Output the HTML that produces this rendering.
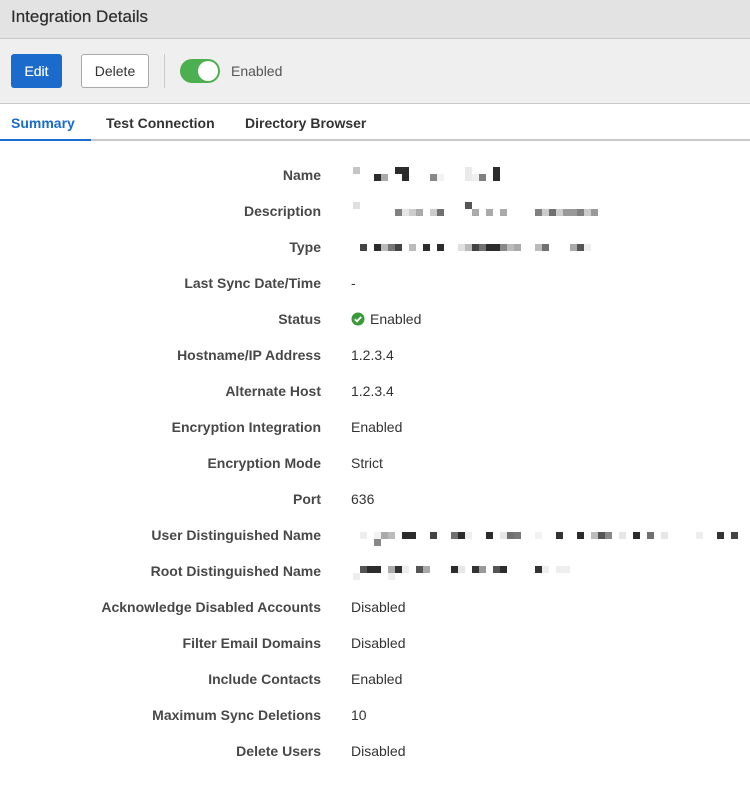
<!DOCTYPE html>
<html><head><style>
*{margin:0;padding:0;box-sizing:border-box}
body{width:750px;height:793px;background:#fff;font-family:"Liberation Sans",sans-serif;color:#333;position:relative;overflow:hidden}
.hdr{position:absolute;left:0;top:0;width:750px;height:39px;background:#e3e3e3;border-bottom:1px solid #c8c8c8}
.hdr span{position:absolute;left:11px;top:7px;font-size:17px;color:#2e2e2e;text-shadow:0 0 0.4px #2e2e2e}
.tb{position:absolute;left:0;top:39px;width:750px;height:65px;background:#efefef;border-bottom:1px solid #c8c8c8}
.btn{position:absolute;top:15px;height:34px;border-radius:3px;font-size:14px;line-height:34px;text-align:center}
.tabs{position:absolute;left:0;top:104px;width:750px;height:37px;border-bottom:2px solid #c9c9c9}
.tab{position:absolute;top:11px;font-size:14px;font-weight:bold;color:#333}
.row{position:absolute;left:0;width:750px;height:20px;font-size:14px}
.row .l{position:absolute;right:429px;top:0;color:#484848;font-weight:bold;white-space:nowrap}
.row .v{position:absolute;left:351px;top:0;color:#333}
.p{position:absolute;width:7px;height:7px}
</style></head><body>
<div class="hdr"><span>Integration Details</span></div>
<div class="tb">
<div class="btn" style="left:11px;width:51px;background:#1a6bcb;color:#fff;text-shadow:0 0 0.4px #fff">Edit</div>
<div class="btn" style="left:81px;width:68px;background:#fff;border:1px solid #aaa;color:#333;line-height:32px">Delete</div>
<div style="position:absolute;left:164px;top:15px;width:1px;height:34px;background:#ccc"></div>
<div style="position:absolute;left:180px;top:20px;width:40px;height:24px;border-radius:12px;background:#4caf50"></div>
<div style="position:absolute;left:198px;top:22px;width:20px;height:20px;border-radius:10px;background:#fff"></div>
<div style="position:absolute;left:231px;top:24px;font-size:14px;color:#555">Enabled</div>
</div>
<div class="tabs">
<div class="tab" style="left:11px;color:#1a6bcb">Summary</div>
<div class="tab" style="left:106px">Test Connection</div>
<div class="tab" style="left:245px">Directory Browser</div>
<div style="position:absolute;left:0;top:35px;width:91px;height:2px;background:#1a6bcb"></div>
</div>
<div class="row" style="top:167px"><span class="l">Name</span></div>
<div class="row" style="top:203px"><span class="l">Description</span></div>
<div class="row" style="top:239px"><span class="l">Type</span></div>
<div class="row" style="top:275px"><span class="l">Last Sync Date/Time</span><span class="v">-</span></div>
<div class="row" style="top:311px"><span class="l">Status</span><span class="v"><svg width="14" height="14" viewBox="0 0 14 14" style="vertical-align:-2px;margin-right:5px"><circle cx="7" cy="7" r="6.5" fill="#3a9a3a"/><path d="M3.8 7.2l2.2 2.1 4.2-4.4" stroke="#fff" stroke-width="1.8" fill="none"/></svg>Enabled</span></div>
<div class="row" style="top:347px"><span class="l">Hostname/IP Address</span><span class="v">1.2.3.4</span></div>
<div class="row" style="top:383px"><span class="l">Alternate Host</span><span class="v">1.2.3.4</span></div>
<div class="row" style="top:419px"><span class="l">Encryption Integration</span><span class="v">Enabled</span></div>
<div class="row" style="top:455px"><span class="l">Encryption Mode</span><span class="v">Strict</span></div>
<div class="row" style="top:491px"><span class="l">Port</span><span class="v">636</span></div>
<div class="row" style="top:527px"><span class="l">User Distinguished Name</span></div>
<div class="row" style="top:563px"><span class="l">Root Distinguished Name</span></div>
<div class="row" style="top:599px"><span class="l">Acknowledge Disabled Accounts</span><span class="v">Disabled</span></div>
<div class="row" style="top:635px"><span class="l">Filter Email Domains</span><span class="v">Disabled</span></div>
<div class="row" style="top:671px"><span class="l">Include Contacts</span><span class="v">Enabled</span></div>
<div class="row" style="top:707px"><span class="l">Maximum Sync Deletions</span><span class="v">10</span></div>
<div class="row" style="top:743px"><span class="l">Delete Users</span><span class="v">Disabled</span></div>

<div class="p" style="left:353px;top:167px;background:#c5c5c5"></div>
<div class="p" style="left:374px;top:174px;background:#2c2c2c"></div>
<div class="p" style="left:381px;top:174px;background:#aaa"></div>
<div class="p" style="left:395px;top:167px;width:14px;background:#2c2c2c"></div>
<div class="p" style="left:402px;top:174px;background:#2c2c2c"></div>
<div class="p" style="left:430px;top:174px;background:#888"></div>
<div class="p" style="left:437px;top:174px;background:#f2f2f2"></div>
<div class="p" style="left:465px;top:167px;height:14px;background:#eaeaea"></div>
<div class="p" style="left:472px;top:174px;background:#f0f0f0"></div>
<div class="p" style="left:479px;top:174px;background:#808080"></div>
<div class="p" style="left:493px;top:167px;height:14px;background:#2c2c2c"></div>
<div class="p" style="left:353px;top:202px;background:#e0e0e0"></div>
<div class="p" style="left:395px;top:209px;background:#808080"></div>
<div class="p" style="left:402px;top:209px;background:#e6e6e6"></div>
<div class="p" style="left:409px;top:209px;background:#ccc"></div>
<div class="p" style="left:416px;top:209px;background:#aaa"></div>
<div class="p" style="left:430px;top:209px;background:#ccc"></div>
<div class="p" style="left:437px;top:209px;background:#707070"></div>
<div class="p" style="left:465px;top:202px;background:#555"></div>
<div class="p" style="left:472px;top:209px;background:#aaa"></div>
<div class="p" style="left:486px;top:209px;background:#aaa"></div>
<div class="p" style="left:500px;top:209px;background:#aaa"></div>
<div class="p" style="left:535px;top:209px;width:63px;background:linear-gradient(90deg,#808080 0 7px,#ccc 7px 14px,#707070 14px 21px,#ccc 21px 28px,#999 28px 42px,#808080 42px 49px,#ccc 49px 56px,#999 56px)"></div>
<div class="p" style="left:360px;top:244px;background:#444"></div>
<div class="p" style="left:374px;top:244px;width:28px;background:linear-gradient(90deg,#2c2c2c 0 7px,#bbb 7px 14px,#777 14px 21px,#444 21px)"></div>
<div class="p" style="left:409px;top:244px;background:#bbb"></div>
<div class="p" style="left:423px;top:244px;background:#2c2c2c"></div>
<div class="p" style="left:437px;top:244px;background:#2c2c2c"></div>
<div class="p" style="left:458px;top:244px;width:63px;background:linear-gradient(90deg,#e0e0e0 0 7px,#bbb 7px 14px,#444 14px 21px,#707070 21px 28px,#2c2c2c 28px 42px,#888 42px 49px,#bbb 49px 56px,#aaa 56px)"></div>
<div class="p" style="left:535px;top:244px;background:#bbb"></div>
<div class="p" style="left:542px;top:244px;background:#707070"></div>
<div class="p" style="left:570px;top:244px;background:#aaa"></div>
<div class="p" style="left:577px;top:244px;background:#555"></div>
<div class="p" style="left:584px;top:244px;background:#eee"></div>
<div class="p" style="left:360px;top:532px;background:#eee"></div>
<div class="p" style="left:374px;top:532px;width:21px;background:linear-gradient(90deg,#f2f2f2 0 7px,#aaa 7px 14px,#bbb 14px)"></div>
<div class="p" style="left:374px;top:539px;background:#888"></div>
<div class="p" style="left:402px;top:532px;width:14px;background:#2c2c2c"></div>
<div class="p" style="left:430px;top:532px;background:#444"></div>
<div class="p" style="left:451px;top:532px;width:21px;background:linear-gradient(90deg,#707070 0 7px,#2c2c2c 7px 14px,#eee 14px)"></div>
<div class="p" style="left:486px;top:532px;background:#2c2c2c"></div>
<div class="p" style="left:500px;top:532px;width:21px;background:linear-gradient(90deg,#e6e6e6 0 7px,#707070 7px 14px,#777 14px)"></div>
<div class="p" style="left:535px;top:532px;background:#f2f2f2"></div>
<div class="p" style="left:556px;top:532px;background:#333"></div>
<div class="p" style="left:577px;top:532px;background:#2c2c2c"></div>
<div class="p" style="left:591px;top:532px;width:21px;background:linear-gradient(90deg,#bbb 0 7px,#555 7px 14px,#888 14px)"></div>
<div class="p" style="left:619px;top:532px;background:#e6e6e6"></div>
<div class="p" style="left:633px;top:532px;background:#2c2c2c"></div>
<div class="p" style="left:647px;top:532px;background:#707070"></div>
<div class="p" style="left:661px;top:532px;background:#e6e6e6"></div>
<div class="p" style="left:696px;top:532px;background:#eee"></div>
<div class="p" style="left:717px;top:532px;background:#333"></div>
<div class="p" style="left:731px;top:532px;background:#444"></div>
<div class="p" style="left:360px;top:566px;width:21px;background:linear-gradient(90deg,#555 0 7px,#2c2c2c 7px)"></div>
<div class="p" style="left:388px;top:566px;width:21px;background:linear-gradient(90deg,#aaa 0 7px,#333 7px 14px,#eee 14px)"></div>
<div class="p" style="left:416px;top:566px;width:14px;background:linear-gradient(90deg,#555 0 7px,#aaa 7px)"></div>
<div class="p" style="left:451px;top:566px;width:14px;background:linear-gradient(90deg,#2c2c2c 0 7px,#e6e6e6 7px)"></div>
<div class="p" style="left:472px;top:566px;width:14px;background:linear-gradient(90deg,#333 0 7px,#999 7px)"></div>
<div class="p" style="left:493px;top:566px;width:14px;background:linear-gradient(90deg,#555 0 7px,#2c2c2c 7px)"></div>
<div class="p" style="left:535px;top:566px;width:14px;background:linear-gradient(90deg,#333 0 7px,#eee 7px)"></div>
<div class="p" style="left:556px;top:566px;width:14px;background:#eee"></div>
<div class="p" style="left:353px;top:573px;background:#eee"></div>
<div class="p" style="left:388px;top:573px;background:#eee"></div>
</body></html>
